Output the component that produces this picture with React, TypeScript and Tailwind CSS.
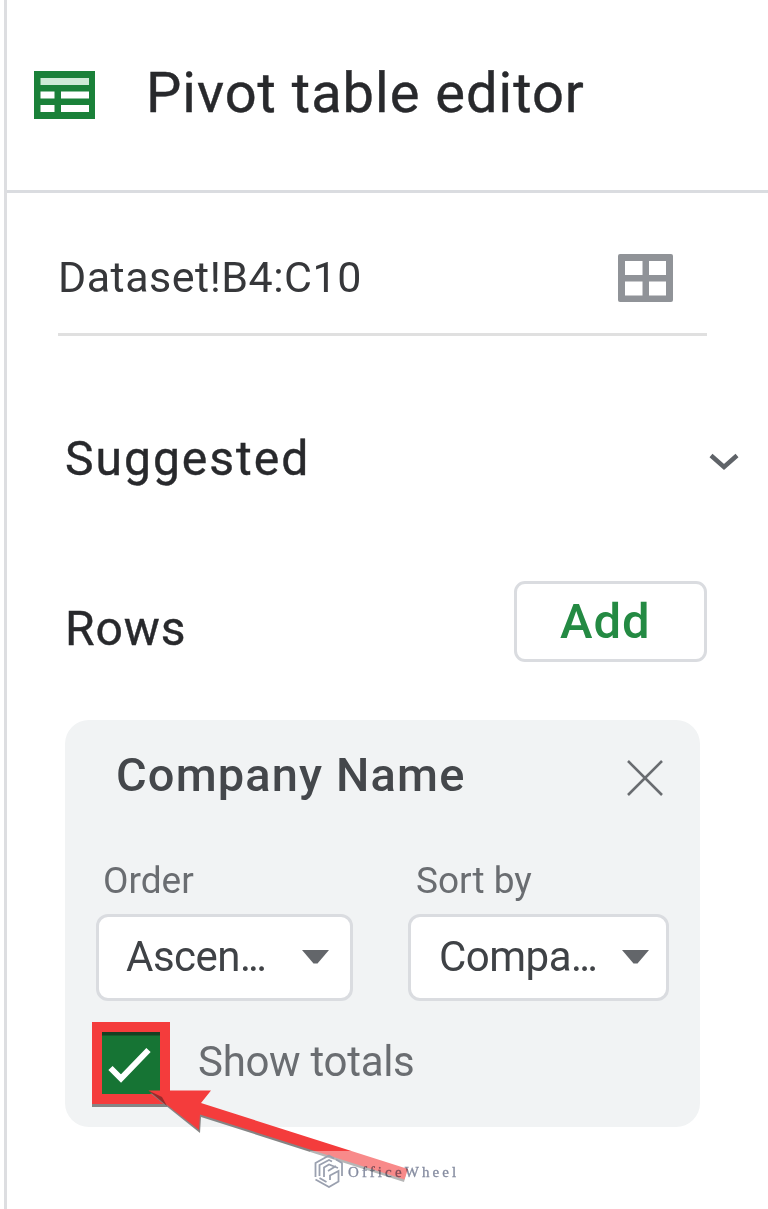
import React from 'react';

const TableIcon = () => (
  <svg width="61" height="48" viewBox="0 0 61 48" className="mt-[8px] shrink-0">
    <rect width="61" height="48" fill="#1a8139" />
    <rect x="6.5" y="7" width="48.5" height="7" fill="#ceead6" />
    <rect x="6.5" y="20.5" width="14" height="7" fill="#fff" />
    <rect x="27" y="20.5" width="28" height="7" fill="#fff" />
    <rect x="6.5" y="34" width="14" height="7" fill="#fff" />
    <rect x="27" y="34" width="28" height="7" fill="#fff" />
  </svg>
);

const GridIcon = () => (
  <svg width="55" height="48" viewBox="0 0 55 48" className="mt-[2px] mr-[34px] shrink-0">
    <rect width="55" height="48" rx="2" fill="#909398" />
    <rect x="7" y="7" width="17.5" height="14" fill="#fff" />
    <rect x="31" y="7" width="17" height="14" fill="#fff" />
    <rect x="7" y="27.5" width="17.5" height="14" fill="#fff" />
    <rect x="31" y="27.5" width="17" height="14" fill="#fff" />
  </svg>
);

interface SelectProps {
  label: string;
  value: string;
  boxClass: string;
  labelClass: string;
}

const SelectField: React.FC<SelectProps> = ({ label, value, boxClass, labelClass }) => (
  <div>
    <div className={`h-[56px] pt-px text-[37px] leading-[44px] text-[#6a6d71] ${labelClass}`}>{label}</div>
    <button
      type="button"
      className={`flex h-[87px] items-start justify-between rounded-[12px] border-[3px] border-[#dadce0] bg-white pt-[15px] ${boxClass}`}
    >
      <span className="text-[42px] leading-[50px] tracking-[-0.5px] text-[#3f4246]">
        {value}
        <span className="tracking-[-3px]">...</span>
      </span>
      <svg width="27" height="14" viewBox="0 0 27 14" className="mt-[18px]">
        <path d="M0 0h27L15.5 13.5h-4z" fill="#63666a" />
      </svg>
    </button>
  </div>
);

const Watermark = () => (
  <div className="absolute top-[1151px] left-[310px] flex h-[40px] w-[150px] items-center bg-white/40 pl-[4px]">
    <svg width="30" height="34" viewBox="0 0 30 34" fill="none" stroke="#9aa0af" strokeWidth="1.8">
      <path d="M1.5 23V9L15 1.500l5 3M5.5 22V11L15 6l3 1.500M28 22V9l-6-3.500" />
      <path d="M1.5 25.5L15 33l9.500-5.500V17L16 21.500v4.500M5.500 24l7 4M10 23V13.5l5-3 9 3.500M14 17l8-5" />
    </svg>
    <span className="mt-[2px] ml-[4px] font-['Liberation_Serif'] text-[15px] leading-[20px] tracking-[3.1px] text-[#858ca0] mix-blend-multiply [-webkit-text-stroke:0.3px_#858ca0]">
      OfficeWheel
    </span>
  </div>
);

export default function App() {
  return (
    <div className="relative h-[1209px] w-[768px] overflow-hidden bg-white pl-[4px] font-[Roboto,sans-serif] whitespace-nowrap">
      <div className="h-full border-l-[3px] border-[#dddee1]">
        <header className="flex h-[193px] items-start border-b-[3px] border-[#dadce0] pt-[63px] pl-[27px]">
          <TableIcon />
          <h1 className="ml-[51px] text-[56px] leading-[60px] tracking-[1px] text-[#28292c] [-webkit-text-stroke:0.4px_#28292c]">
            Pivot table editor
          </h1>
        </header>

        <div className="mt-[59px] ml-[51px] flex h-[84px] w-[649px] items-start justify-between border-b-[3px] border-[#e0e0e0]">
          <span className="text-[43px] leading-[50px] tracking-[0.5px] text-[#36373a]">Dataset!B4:C10</span>
          <GridIcon />
        </div>

        <section className="mt-[95px] ml-[58px] flex h-[150px] items-start justify-between pr-[29px]">
          <h2 className="text-[48px] leading-[56px] tracking-[2px] text-[#28292c] [-webkit-text-stroke:0.4px_#28292c]">
            Suggested
          </h2>
          <svg width="30" height="18" viewBox="0 0 30 18" className="mt-[22px]" fill="none">
            <path d="M2 2.5l13 11.5L28 2.5" stroke="#5f6368" strokeWidth="4.5" />
          </svg>
        </section>

        <section className="ml-[58px] flex h-[81px] w-[642px] items-start justify-between">
          <h2 className="mt-[20px] text-[48px] leading-[56px] tracking-[0.9px] text-[#28292c] [-webkit-text-stroke:0.4px_#28292c]">
            Rows
          </h2>
          <button
            type="button"
            className="h-[81px] w-[193px] rounded-[11px] border-[3px] border-[#dadce0] pt-[10px] pb-[9px] pl-[43px] text-left text-[49px] leading-[56px] font-medium tracking-[1px] text-[#248a43]"
          >
            Add
          </button>
        </section>

        <section className="mt-[58px] ml-[58px] h-[407px] w-[635px] rounded-[24px] bg-[#f1f3f4] pt-[27px]">
          <div className="flex h-[110px] items-start justify-between pr-[36px] pl-[51px]">
            <h3 className="text-[47px] leading-[56px] font-medium tracking-[1.15px] text-[#44474b]">Company Name</h3>
            <svg width="38" height="36" viewBox="0 0 38 36" className="mt-[13px]">
              <path d="M2 1l34 34M36 1L2 35" stroke="#696c70" strokeWidth="2.6" />
            </svg>
          </div>
          <div className="flex justify-between pt-px pr-[31px] pl-[31px]">
            <SelectField label="Order" value="Ascen" boxClass="w-[257px] pl-[27px] pr-[21px]" labelClass="pl-[7px]" />
            <SelectField label="Sort by" value="Compa" boxClass="w-[261px] pl-[28px] pr-[17px]" labelClass="pl-[8px]" />
          </div>
          <label className="mt-[21px] flex items-start pl-[27px]">
            <span className="flex h-[82px] w-[78px] items-center justify-center border-[10px] border-[#f43c3c] bg-[#167434] shadow-[0_3px_0_#858585]">
              <svg width="58" height="62" viewBox="0 0 58 62" fill="none">
                <path d="M0 0h58v3.5H0z" fill="#173f22" />
                <path d="M8.5 36l10.5 10.5L46.5 18" stroke="#fff" strokeWidth="6" />
              </svg>
            </span>
            <span className="mt-[15px] ml-[28px] text-[42px] leading-[50px] tracking-[-0.3px] text-[#6a6d71]">
              Show totals
            </span>
          </label>
        </section>
      </div>

      {/* callout arrow, grey shadow below the red shape */}
      <svg width="280" height="110" viewBox="0 0 280 110" className="absolute top-[1085px] left-[140px]">
        <path d="M10 8L60 48l1-16 203 65 2-8L61 22z" fill="#858585" />
        <path d="M8.5 5.5H71L61 18l207 66-3.500 10.500L60 29.5 59 45z" fill="#f43c3c" />
        <path d="M8.500 5.500L27 21l-5-9z" fill="#982c2c" />
      </svg>
      <Watermark />
    </div>
  );
}
